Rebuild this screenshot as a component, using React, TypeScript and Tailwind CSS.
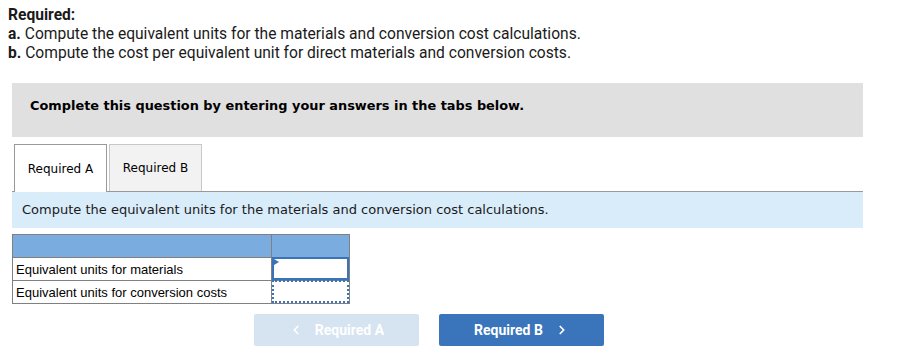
import { ChevronLeft, ChevronRight } from 'lucide-react';

export default function App() {
  return (
    <div className="w-[922px] h-[362px] bg-white relative">
      <div className="pt-[6px] pl-[8px] text-[15.6px] leading-[19px] text-[#1a1a1a] font-['Roboto',sans-serif]">
        <p className="font-bold">Required:</p>
        <p>
          <span className="font-bold">a.</span> Compute the equivalent units for the materials and conversion cost calculations.
        </p>
        <p>
          <span className="font-bold">b.</span> Compute the cost per equivalent unit for direct materials and conversion costs.
        </p>
      </div>

      <div className="mt-[20px] mx-[12px] w-[851px] h-[54px] bg-[#e0e0e0] flex items-start pt-[13px] pl-[18px]">
        <p className="font-['DejaVu_Sans',Verdana,sans-serif] font-bold text-[12.9px] text-black">
          Complete this question by entering your answers in the tabs below.
        </p>
      </div>

      <div className="mx-[12px] w-[851px] mt-[7px]">
        <div className="flex items-end h-[48px] border-b border-[#999]">
          <div className="ml-[2px] w-[93px] h-[48px] -mb-px bg-white border border-b-0 border-[#999] flex items-center justify-center font-['DejaVu_Sans',Verdana,sans-serif] text-[12px] text-black">
            Required A
          </div>
          <div className="ml-[2px] w-[93px] h-[47px] bg-[#f2f2f2] border border-b-0 border-[#c8c8c8] flex items-center justify-center font-['DejaVu_Sans',Verdana,sans-serif] text-[12px] text-black">
            Required B
          </div>
        </div>
        <div className="h-[36px] bg-[#d9ecfa] flex items-center pl-[10px] font-['DejaVu_Sans',Verdana,sans-serif] text-[13px] text-[#1a1a1a]">
          Compute the equivalent units for the materials and conversion cost calculations.
        </div>
      </div>

      <div className="mx-[12px] mt-[6px] w-[338px] border border-[#808080] font-['Liberation_Sans',Arial,sans-serif] text-[13px] text-black">
        <div className="flex h-[23px] bg-[#7aacdf] border-b border-[#808080]">
          <div className="w-[259px] border-r border-[#808080]"></div>
          <div className="flex-1"></div>
        </div>
        <div className="flex h-[23px] border-b border-[#808080]">
          <div className="w-[259px] border-r border-[#808080] flex items-center pl-[3px] pt-[2px]">Equivalent units for materials</div>
          <div className="flex-1 relative border-2 border-[#3b73b9] bg-white -mt-px">
            <span className="absolute left-0 top-0 w-0 h-0 border-y-[3px] border-y-transparent border-l-[5px] border-l-[#3b73b9]"></span>
          </div>
        </div>
        <div className="flex h-[22px]">
          <div className="w-[259px] border-r border-[#808080] flex items-center pl-[3px] pt-[2px]">Equivalent units for conversion costs</div>
          <div className="flex-1 border-2 border-dotted border-[#3b73b9] -mt-px"></div>
        </div>
      </div>

      <div className="flex gap-[20px] ml-[254px] mt-[10px] font-['Roboto',sans-serif] font-bold text-[14px] text-white">
        <button className="w-[165px] h-[32px] rounded-[2px] bg-[#d6e3f1] flex items-center justify-center gap-[12px]">
          <ChevronLeft className="w-[14px] h-[14px]" strokeWidth={3} />
          <span>Required A</span>
        </button>
        <button className="w-[165px] h-[32px] rounded-[2px] bg-[#3a75bb] flex items-center justify-center gap-[12px]">
          <span>Required B</span>
          <ChevronRight className="w-[14px] h-[14px]" strokeWidth={3} />
        </button>
      </div>
    </div>
  );
}
